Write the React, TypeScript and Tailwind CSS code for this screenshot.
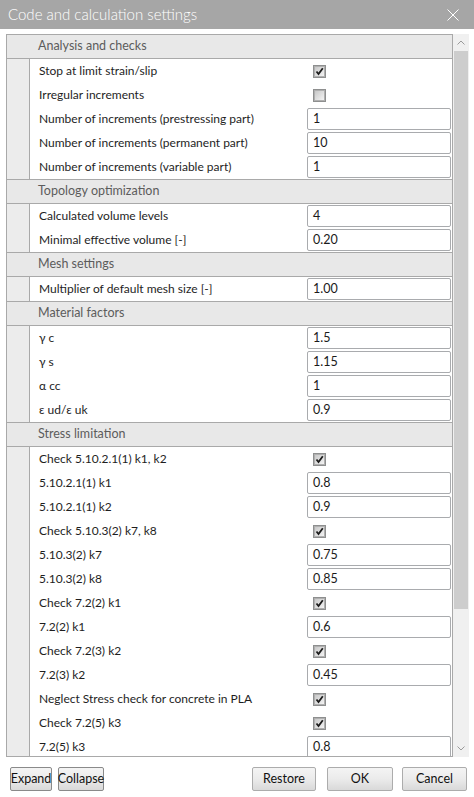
import React from "react";

type Row =
  | { label: string; kind: "check"; checked: boolean }
  | { label: string; kind: "input"; value: string };

type Section = { title: string; rows: Row[] };

const SECTIONS: Section[] = [
  {
    title: "Analysis and checks",
    rows: [
      { label: "Stop at limit strain/slip", kind: "check", checked: true },
      { label: "Irregular increments", kind: "check", checked: false },
      { label: "Number of increments (prestressing part)", kind: "input", value: "1" },
      { label: "Number of increments (permanent part)", kind: "input", value: "10" },
      { label: "Number of increments (variable part)", kind: "input", value: "1" },
    ],
  },
  {
    title: "Topology optimization",
    rows: [
      { label: "Calculated volume levels", kind: "input", value: "4" },
      { label: "Minimal effective volume [-]", kind: "input", value: "0.20" },
    ],
  },
  {
    title: "Mesh settings",
    rows: [{ label: "Multiplier of default mesh size [-]", kind: "input", value: "1.00" }],
  },
  {
    title: "Material factors",
    rows: [
      { label: "γ c", kind: "input", value: "1.5" },
      { label: "γ s", kind: "input", value: "1.15" },
      { label: "α cc", kind: "input", value: "1" },
      { label: "ε ud/ε uk", kind: "input", value: "0.9" },
    ],
  },
  {
    title: "Stress limitation",
    rows: [
      { label: "Check 5.10.2.1(1) k1, k2", kind: "check", checked: true },
      { label: "5.10.2.1(1) k1", kind: "input", value: "0.8" },
      { label: "5.10.2.1(1) k2", kind: "input", value: "0.9" },
      { label: "Check 5.10.3(2) k7, k8", kind: "check", checked: true },
      { label: "5.10.3(2) k7", kind: "input", value: "0.75" },
      { label: "5.10.3(2) k8", kind: "input", value: "0.85" },
      { label: "Check 7.2(2) k1", kind: "check", checked: true },
      { label: "7.2(2) k1", kind: "input", value: "0.6" },
      { label: "Check 7.2(3) k2", kind: "check", checked: true },
      { label: "7.2(3) k2", kind: "input", value: "0.45" },
      { label: "Neglect Stress check for concrete in PLA", kind: "check", checked: true },
      { label: "Check 7.2(5) k3", kind: "check", checked: true },
      { label: "7.2(5) k3", kind: "input", value: "0.8" },
    ],
  },
];

function CheckBox({ checked }: { checked: boolean }) {
  return (
    <div className="ml-[6px] flex h-[13px] w-[13px] items-center justify-center border border-[#8e8f8f] bg-white">
      <div className="flex h-[11px] w-[11px] items-center justify-center border border-[#b0b0b0] bg-gradient-to-br from-[#c8c8c8] to-[#f4f4f4]">
        {checked && (
          <svg width="9" height="9" viewBox="0 0 9 9">
            <path d="M1.5 4.5 L3.5 7 L7.8 1.2" fill="none" stroke="#1c1c1c" strokeWidth="1.8" />
          </svg>
        )}
      </div>
    </div>
  );
}

function Field({ value }: { value: string }) {
  return (
    <div className="flex h-[22px] w-[144px] items-center rounded-[2px] border border-[#a9abae] bg-white pl-[5px] text-[12.5px] text-[#1a1a1a]">
      {value}
    </div>
  );
}

function Btn({ label, className }: { label: string; className: string }) {
  return (
    <div
      className={
        "flex h-[24px] items-center justify-center rounded-[2px] border bg-gradient-to-b from-[#f4f4f4] via-[#ebebeb] to-[#d9d9d9] text-[12.5px] text-[#111] " +
        className
      }
    >
      {label}
    </div>
  );
}

export default function App() {
  return (
    <div className="flex h-[797px] w-[474px] flex-col bg-white font-['Lato',sans-serif]">
      <div className="flex h-[29px] items-center justify-between bg-[#a6a6a6] pl-[8px] pr-[15px]">
        <span className="text-[15px] font-light text-white">Code and calculation settings</span>
        <svg width="12" height="12" viewBox="0 0 12 12">
          <path d="M0.5 0.5 L11.5 11.5 M11.5 0.5 L0.5 11.5" stroke="#ffffff" strokeWidth="1" />
        </svg>
      </div>

      <div className="mt-[5px] flex pl-[6px]">
        <div className="h-[723px] w-[447px] overflow-hidden border-x border-b border-[#a9a9a9]">
          {SECTIONS.map((s) => (
            <div key={s.title}>
              <div className="-mx-px flex h-[25px] items-center border border-[#a9a9a9] bg-[#e8e8e8] pl-[31px] text-[12.5px] text-[#5c5c5c]">
                {s.title}
              </div>
              <div className="flex">
                <div className="w-[23px] shrink-0 border-r border-[#a9a9a9] bg-[#ececec]" />
                <div className="flex-1">
                  {s.rows.map((r) => (
                    <div key={r.label} className="flex h-[24px] items-center">
                      <div className="flex-1 pl-[9px] text-[12px] text-[#1e1e1e]">{r.label}</div>
                      <div className="mr-px w-[144px]">
                        {r.kind === "check" ? <CheckBox checked={r.checked} /> : <Field value={r.value} />}
                      </div>
                    </div>
                  ))}
                </div>
              </div>
            </div>
          ))}
        </div>

        {/* scrollbar */}
        <div className="flex h-[723px] w-[16px] flex-col bg-[#f0f0f0]">
          <div className="flex h-[17px] items-center justify-center">
            <svg width="8" height="5" viewBox="0 0 8 5">
              <path d="M0.5 4.5 L4 1 L7.5 4.5" fill="none" stroke="#9a9a9a" strokeWidth="1" />
            </svg>
          </div>
          <div className="mx-px h-[558px] bg-[#cdcdcd]" />
          <div className="flex-1" />
          <div className="flex h-[17px] items-center justify-center">
            <svg width="8" height="5" viewBox="0 0 8 5">
              <path d="M0.5 0.5 L4 4 L7.5 0.5" fill="none" stroke="#9a9a9a" strokeWidth="1" />
            </svg>
          </div>
        </div>
      </div>

      <div className="mt-[10px] flex items-center pl-[10px]">
        <Btn label="Expand" className="w-[42px] border-[#8a8a8a]" />
        <Btn label="Collapse" className="ml-[6px] w-[46px] border-[#8a8a8a]" />
        <div className="flex-1" />
        <Btn label="Restore" className="w-[64px] border-[#acacac]" />
        <Btn label="OK" className="ml-[11px] w-[66px] border-[#acacac]" />
        <Btn label="Cancel" className="ml-[9px] mr-[7px] w-[65px] border-[#acacac]" />
      </div>
    </div>
  );
}
